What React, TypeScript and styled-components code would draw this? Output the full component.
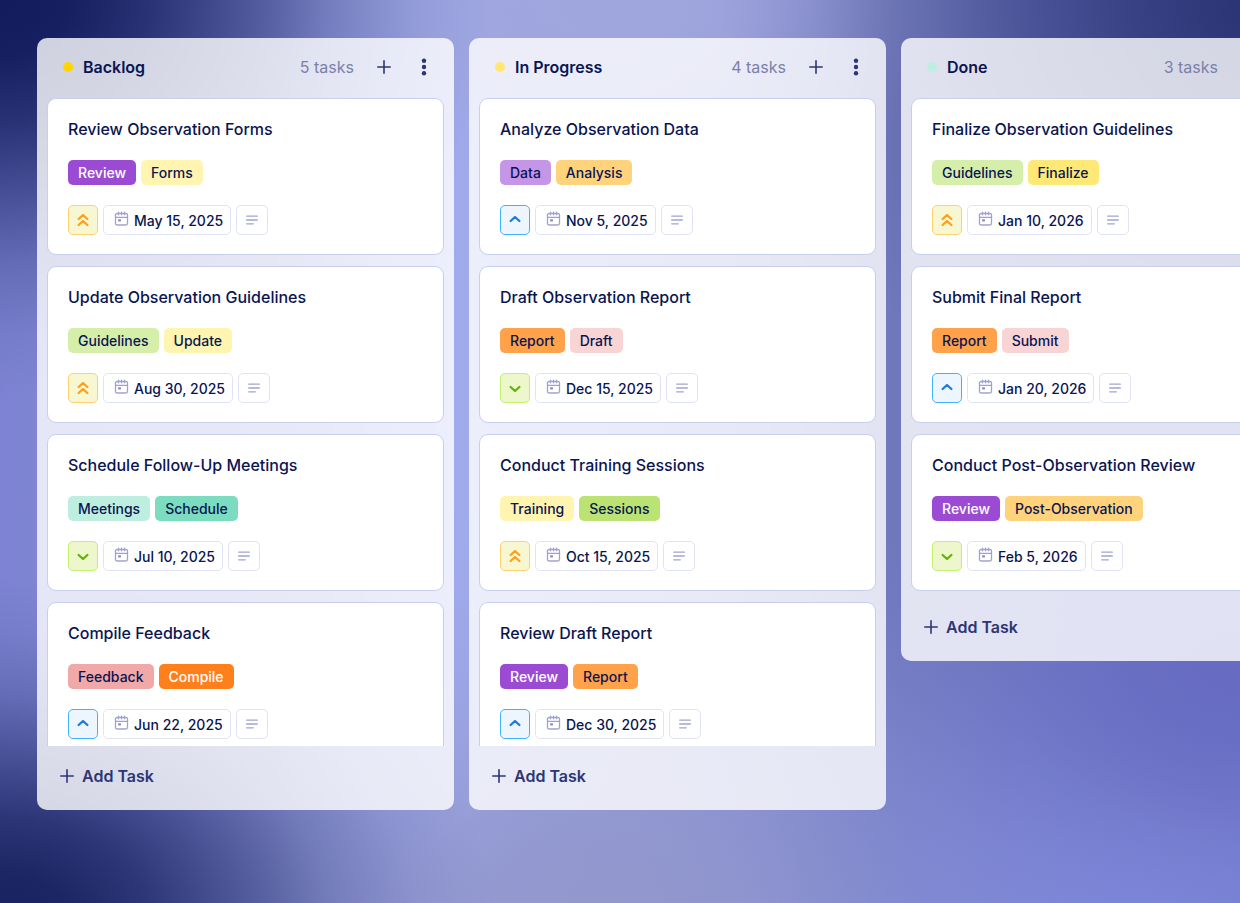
import React from 'react';
import styled, { createGlobalStyle } from 'styled-components';

const GlobalStyle = createGlobalStyle`
  *, *::before, *::after { box-sizing: border-box; }
  body { margin: 0; font-family: Inter, "Liberation Sans", sans-serif; color: #0a1551; }
  button { font: inherit; color: inherit; background: none; border: 0; padding: 0; cursor: pointer; }
  h2, h3, ul { margin: 0; padding: 0; font: inherit; }
  ul { list-style: none; }
`;

const glow = (size: string, at: string, rgb: string) =>
  `radial-gradient(ellipse ${size} at ${at},
    rgba(${rgb}, 1) 0%, rgba(${rgb}, 0.96) 14%, rgba(${rgb}, 0.8) 30%, rgba(${rgb}, 0.52) 48%,
    rgba(${rgb}, 0.24) 66%, rgba(${rgb}, 0.07) 84%, rgba(${rgb}, 0) 100%)`;

const Board = styled.main`
  display: flex;
  align-items: flex-start;
  gap: 15px;
  height: 100vh;
  padding: 38px 37px 93px;
  overflow: hidden;
  background:
    ${glow('40% 44%', '0% 0%', '18, 28, 92')},
    ${glow('40% 38%', '0% 102%', '24, 34, 96')},
    ${glow('48% 50%', '106% 0%', '42, 52, 116')},
    ${glow('34% 28%', '50% 0%', '160, 166, 221')},
    ${glow('30% 28%', '100% 74%', '103, 108, 194')},
    ${glow('42% 52%', '48% 106%', '146, 151, 204')},
    ${glow('54% 50%', '88% 106%', '124, 134, 216')},
    linear-gradient(90deg, #7d83d2 0%, #8890d6 22%, #a0abee 37%, #8f98dc 54%, #7078bc 72%, #6a71c0 100%);
`;

const Column = styled.section`
  flex: 0 0 417px;
  display: flex;
  flex-direction: column;
  max-height: 100%;
  border-radius: 10px;
  background: rgba(255, 255, 255, 0.8);
`;

const ColumnHeader = styled.header`
  flex: none;
  display: flex;
  align-items: center;
  height: 60px;
  padding: 0 20px 2px 26px;
`;

const Dot = styled.span<{ $color: string }>`
  width: 10px;
  height: 10px;
  margin-right: 10px;
  border-radius: 50%;
  background: ${(p) => p.$color};
`;

const ColumnTitle = styled.h2`
  flex: 1;
  font-size: 16px;
  line-height: 24px;
  font-weight: 600;
`;

const Count = styled.span`
  font-size: 16px;
  line-height: 24px;
  color: #7b80ab;
`;

const IconButton = styled.button`
  display: grid;
  place-items: center;
  width: 20px;
  height: 24px;
  margin-left: 20px;
  color: #2c3674;
`;

const CardList = styled.ul`
  flex: 0 1 auto;
  min-height: 0;
  display: flex;
  flex-direction: column;
  gap: 11px;
  padding: 0 10px 6px;
  overflow-y: auto;
  scrollbar-width: none;
`;

const Card = styled.li`
  flex: none;
  padding: 19px 20px;
  border: 1px solid #c8ceed;
  border-radius: 9px;
  background: #fff;
`;

const CardTitle = styled.h3`
  font-size: 16px;
  line-height: 22px;
  font-weight: 500;
`;

const Tags = styled.div`
  display: flex;
  gap: 5px;
  margin-top: 20px;
`;

const Tag = styled.span<{ $bg: string; $light?: boolean }>`
  padding: 0 10px;
  border-radius: 5px;
  font-size: 14px;
  line-height: 25px;
  font-weight: 500;
  color: ${(p) => (p.$light ? '#fff' : '#0a1551')};
  background: ${(p) => p.$bg};
`;

const Meta = styled.div`
  display: flex;
  gap: 5px;
  margin-top: 20px;
`;

const MetaButton = styled.button`
  display: flex;
  align-items: center;
  justify-content: center;
  height: 30px;
  min-width: 32px;
  border: 1px solid #e0e3f5;
  border-radius: 5px;
`;

const DateButton = styled(MetaButton)`
  gap: 5px;
  padding: 0 7px 0 10px;
  font-size: 14px;
  font-weight: 500;
`;

const PriorityButton = styled(MetaButton)<{ $color: string; $bg: string; $line: string }>`
  min-width: 30px;
  color: ${(p) => p.$color};
  background: ${(p) => p.$bg};
  border-color: ${(p) => p.$line};
`;

const ColumnFooter = styled.footer`
  flex: none;
  height: 64px;
  padding: 18px 22px 0;
`;

const AddButton = styled.button`
  display: flex;
  align-items: center;
  gap: 7px;
  font-size: 16px;
  line-height: 24px;
  font-weight: 600;
  color: #2c3674;
`;

const PlusIcon = () => (
  <svg width="16" height="16" viewBox="0 0 16 16" stroke="currentColor" strokeWidth="1.6" strokeLinecap="round" aria-hidden="true">
    <path d="M8 1.8v12.4M1.8 8h12.4" />
  </svg>
);

const MoreIcon = () => (
  <svg width="6" height="18" viewBox="0 0 6 18" fill="currentColor" aria-hidden="true">
    <circle cx="3" cy="2.8" r="2.2" />
    <circle cx="3" cy="9" r="2.2" />
    <circle cx="3" cy="15.2" r="2.2" />
  </svg>
);

const CalendarIcon = () => (
  <svg width="15" height="18" viewBox="0 0 15 18" fill="none" stroke="#a0a4cc" strokeWidth="1.3" strokeLinecap="round" aria-hidden="true">
    <rect x="1.5" y="2.5" width="12" height="11.5" rx="1.5" />
    <path d="M1.5 6.3h12M4.5 1.2v2.6M7.5 1.2v2.6M10.5 1.2v2.6" />
    <rect x="4" y="8.2" width="3" height="2.4" rx=".5" fill="#8d92c2" stroke="none" />
  </svg>
);

const LinesIcon = () => (
  <svg width="12" height="10" viewBox="0 0 12 10" fill="none" stroke="#a0a4cc" strokeWidth="1.3" strokeLinecap="round" aria-hidden="true">
    <path d="M.7 1.2h10.6M.7 5h10.6M.7 8.8h6.6" />
  </svg>
);

type Level = 'high' | 'medium' | 'low';

const levels: Record<Level, { label: string; color: string; bg: string; line: string; path: string }> = {
  high: { label: 'High priority', color: '#ff9f1c', bg: '#f7f8d2', line: '#ffd070', path: 'M2.6 6L7 2l4.4 4M2.6 12L7 8l4.4 4' },
  medium: { label: 'Medium priority', color: '#1f7ae0', bg: '#edf6ff', line: '#40b4f8', path: 'M2.6 8L7 4l4.4 4' },
  low: { label: 'Low priority', color: '#64b20c', bg: '#eef7cc', line: '#c0f26c', path: 'M2.6 6L7 10l4.4-4' },
};

const Priority = ({ level }: { level: Level }) => {
  const l = levels[level];
  return (
    <PriorityButton type="button" aria-label={l.label} $color={l.color} $bg={l.bg} $line={l.line}>
      <svg width="14" height="14" viewBox="0 0 14 14" fill="none" stroke="currentColor" strokeWidth="2.3" strokeLinecap="round" strokeLinejoin="round" aria-hidden="true">
        <path d={l.path} />
      </svg>
    </PriorityButton>
  );
};

const tagColors: Record<string, string> = {
  Review: '#9b4bd3',
  Forms: '#fff5b0',
  Guidelines: '#d5efaa',
  Update: '#fff5b0',
  Meetings: '#bdeee0',
  Schedule: '#7cdcbf',
  Feedback: '#f0a8a8',
  Compile: '#ff7f1a',
  Data: '#c595e8',
  Analysis: '#ffd27c',
  Report: '#ffa24a',
  Draft: '#f9d4d4',
  Training: '#fff5b0',
  Sessions: '#bae374',
  Finalize: '#ffe976',
  Submit: '#f9d4d4',
  'Post-Observation': '#ffd27c',
};
const lightText = ['Review', 'Compile'];

type Task = { title: string; tags: string[]; level: Level; date: string };
type ColumnData = { name: string; dot: string; count: string; tasks: Task[] };

const columns: ColumnData[] = [
  {
    name: 'Backlog', dot: '#ffd500', count: '5 tasks',
    tasks: [
      { title: 'Review Observation Forms', tags: ['Review', 'Forms'], level: 'high', date: 'May 15, 2025' },
      { title: 'Update Observation Guidelines', tags: ['Guidelines', 'Update'], level: 'high', date: 'Aug 30, 2025' },
      { title: 'Schedule Follow-Up Meetings', tags: ['Meetings', 'Schedule'], level: 'low', date: 'Jul 10, 2025' },
      { title: 'Compile Feedback', tags: ['Feedback', 'Compile'], level: 'medium', date: 'Jun 22, 2025' },
    ],
  },
  {
    name: 'In Progress', dot: '#ffe772', count: '4 tasks',
    tasks: [
      { title: 'Analyze Observation Data', tags: ['Data', 'Analysis'], level: 'medium', date: 'Nov 5, 2025' },
      { title: 'Draft Observation Report', tags: ['Report', 'Draft'], level: 'low', date: 'Dec 15, 2025' },
      { title: 'Conduct Training Sessions', tags: ['Training', 'Sessions'], level: 'high', date: 'Oct 15, 2025' },
      { title: 'Review Draft Report', tags: ['Review', 'Report'], level: 'medium', date: 'Dec 30, 2025' },
    ],
  },
  {
    name: 'Done', dot: '#bdeee0', count: '3 tasks',
    tasks: [
      { title: 'Finalize Observation Guidelines', tags: ['Guidelines', 'Finalize'], level: 'high', date: 'Jan 10, 2026' },
      { title: 'Submit Final Report', tags: ['Report', 'Submit'], level: 'medium', date: 'Jan 20, 2026' },
      { title: 'Conduct Post-Observation Review', tags: ['Review', 'Post-Observation'], level: 'low', date: 'Feb 5, 2026' },
    ],
  },
];

const TaskCard = ({ task }: { task: Task }) => (
  <Card>
    <CardTitle>{task.title}</CardTitle>
    <Tags>
      {task.tags.map((t) => (
        <Tag key={t} $bg={tagColors[t]} $light={lightText.includes(t)}>{t}</Tag>
      ))}
    </Tags>
    <Meta>
      <Priority level={task.level} />
      <DateButton type="button"><CalendarIcon />{task.date}</DateButton>
      <MetaButton type="button" aria-label="Description"><LinesIcon /></MetaButton>
    </Meta>
  </Card>
);

export default function App() {
  return (
    <>
      <GlobalStyle />
      <Board>
        {columns.map((c) => (
          <Column key={c.name}>
            <ColumnHeader>
              <Dot $color={c.dot} />
              <ColumnTitle>{c.name}</ColumnTitle>
              <Count>{c.count}</Count>
              <IconButton type="button" aria-label="Add task"><PlusIcon /></IconButton>
              <IconButton type="button" aria-label="Column menu"><MoreIcon /></IconButton>
            </ColumnHeader>
            <CardList>
              {c.tasks.map((t) => <TaskCard key={t.title} task={t} />)}
            </CardList>
            <ColumnFooter>
              <AddButton type="button"><PlusIcon />Add Task</AddButton>
            </ColumnFooter>
          </Column>
        ))}
      </Board>
    </>
  );
}
